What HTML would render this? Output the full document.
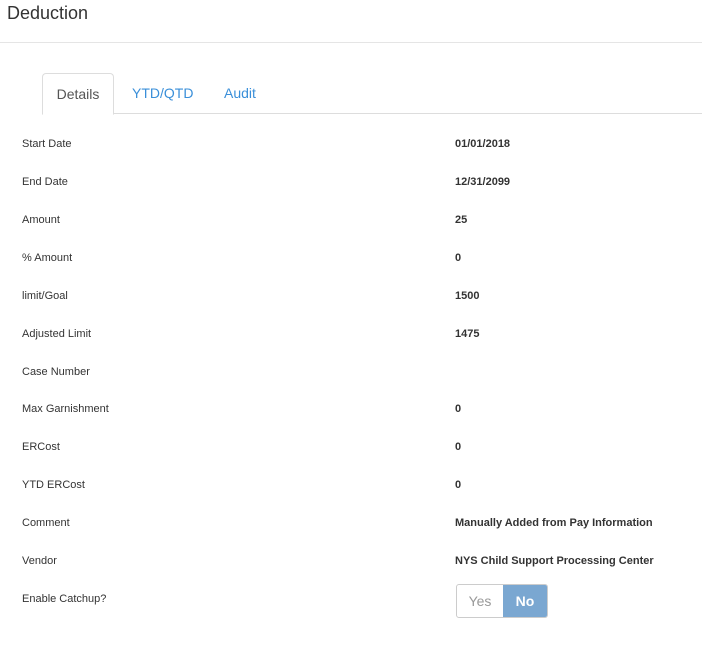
<!DOCTYPE html>
<html><head><style>
body{margin:0;width:702px;height:657px;background:#fff;font-family:"Liberation Sans",Arial,sans-serif;color:#333;position:relative;overflow:hidden}
.t{position:absolute;left:7px;top:3px;font-size:18px;color:#333}
.hr{position:absolute;left:0;top:42px;width:702px;height:1px;background:#e5e5e5}
.tabline{position:absolute;left:42px;top:113px;width:660px;height:1px;background:#ddd}
.tab{position:absolute;top:73px;height:40px;line-height:40px;font-size:14px;color:#3a8fd9}
.act{left:42px;width:70px;border:1px solid #ddd;border-bottom:1px solid #fff;border-radius:4px 4px 0 0;background:#fff;color:#555;text-align:center;height:40px}
.r{position:absolute;font-size:11px;line-height:14px;margin-top:1px}
.l{left:22px}.v{left:455px;font-weight:bold}
.tg{position:absolute;left:456px;top:584px;width:90px;height:32px;border:1px solid #ccc;border-radius:3px;overflow:hidden;font-size:14px}
.tg span{position:absolute;top:0;height:32px;line-height:32px;text-align:center}
</style></head><body>
<div class="t">Deduction</div>
<div class="hr"></div>
<div class="tabline"></div>
<div class="tab act">Details</div>
<div class="tab" style="left:132px">YTD/QTD</div>
<div class="tab" style="left:224px">Audit</div>
<div class="r l" style="top:136px">Start Date</div><div class="r v" style="top:136px">01/01/2018</div>
<div class="r l" style="top:174px">End Date</div><div class="r v" style="top:174px">12/31/2099</div>
<div class="r l" style="top:212px">Amount</div><div class="r v" style="top:212px">25</div>
<div class="r l" style="top:250px">% Amount</div><div class="r v" style="top:250px">0</div>
<div class="r l" style="top:288px">limit/Goal</div><div class="r v" style="top:288px">1500</div>
<div class="r l" style="top:326px">Adjusted Limit</div><div class="r v" style="top:326px">1475</div>
<div class="r l" style="top:364px">Case Number</div>
<div class="r l" style="top:401px">Max Garnishment</div><div class="r v" style="top:401px">0</div>
<div class="r l" style="top:439px">ERCost</div><div class="r v" style="top:439px">0</div>
<div class="r l" style="top:477px">YTD ERCost</div><div class="r v" style="top:477px">0</div>
<div class="r l" style="top:515px">Comment</div><div class="r v" style="top:515px">Manually Added from Pay Information</div>
<div class="r l" style="top:553px">Vendor</div><div class="r v" style="top:553px">NYS Child Support Processing Center</div>
<div class="r l" style="top:591px">Enable Catchup?</div>
<div class="tg"><span style="left:0;width:46px;color:#999">Yes</span><span style="left:46px;width:44px;background:#7aa7d1;color:#fff;font-weight:bold">No</span></div>
</body></html>
